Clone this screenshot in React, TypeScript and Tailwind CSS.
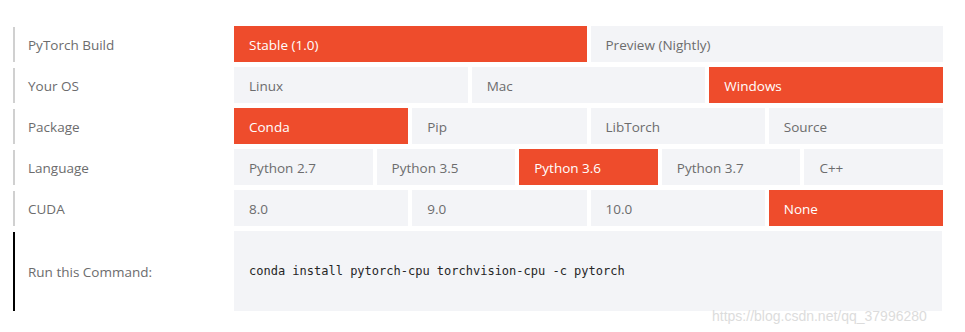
import React from 'react';

type Opt = { label: string; active?: boolean };

const rows: { title: string; options: Opt[] }[] = [
  { title: 'PyTorch Build', options: [{ label: 'Stable (1.0)', active: true }, { label: 'Preview (Nightly)' }] },
  { title: 'Your OS', options: [{ label: 'Linux' }, { label: 'Mac' }, { label: 'Windows', active: true }] },
  {
    title: 'Package',
    options: [{ label: 'Conda', active: true }, { label: 'Pip' }, { label: 'LibTorch' }, { label: 'Source' }],
  },
  {
    title: 'Language',
    options: [
      { label: 'Python 2.7' },
      { label: 'Python 3.5' },
      { label: 'Python 3.6', active: true },
      { label: 'Python 3.7' },
      { label: 'C++' },
    ],
  },
  { title: 'CUDA', options: [{ label: '8.0' }, { label: '9.0' }, { label: '10.0' }, { label: 'None', active: true }] },
];

function Label({ children, dark }: { children: React.ReactNode; dark?: boolean }) {
  return (
    <div
      className={`w-[219px] shrink-0 mt-px flex items-center pl-[13px] pt-[2px] border-l-2 ${
        dark ? 'border-black' : 'border-[#d0d0d0]'
      } text-[13.5px] text-[#6c6c6d]`}
    >
      {children}
    </div>
  );
}

export default function App() {
  return (
    <div
      className="relative w-[965px] h-[332px] bg-white pt-[26px] pl-[13px] pr-[22px]"
      style={{ fontFamily: '"Open Sans", "Liberation Sans", sans-serif' }}
    >
      <div className="flex flex-col gap-[5px]">
        {rows.map((row) => (
          <div key={row.title} className="flex h-[36px]">
            <Label>{row.title}</Label>
            <div className="ml-[2px] flex flex-1 gap-1">
              {row.options.map((o) => (
                <div
                  key={o.label}
                  className={`flex-1 flex items-center pl-[15px] pt-[2px] text-[13.5px] ${
                    o.active ? 'bg-[#ee4c2c] text-white' : 'bg-[#f3f4f7] text-[#6c6c6d]'
                  }`}
                >
                  {o.label}
                </div>
              ))}
            </div>
          </div>
        ))}
        <div className="flex h-[80px]">
          <Label dark>Run this Command:</Label>
          <div className="ml-[2px] mr-px flex flex-1 items-center pl-[15px] bg-[#f3f4f7]">
            <code className="text-[12px] text-[#262626]" style={{ fontFamily: '"DejaVu Sans Mono", monospace' }}>
              conda install pytorch-cpu torchvision-cpu -c pytorch
            </code>
          </div>
        </div>
      </div>

      {/* csdn watermark */}
      <div
        className="absolute left-[712px] top-[309px] text-[14px] leading-none text-[#dcdcdc] whitespace-nowrap"
        style={{ fontFamily: '"Liberation Sans", sans-serif' }}
      >
        https://blog.csdn.net/qq_37996280
      </div>
    </div>
  );
}
